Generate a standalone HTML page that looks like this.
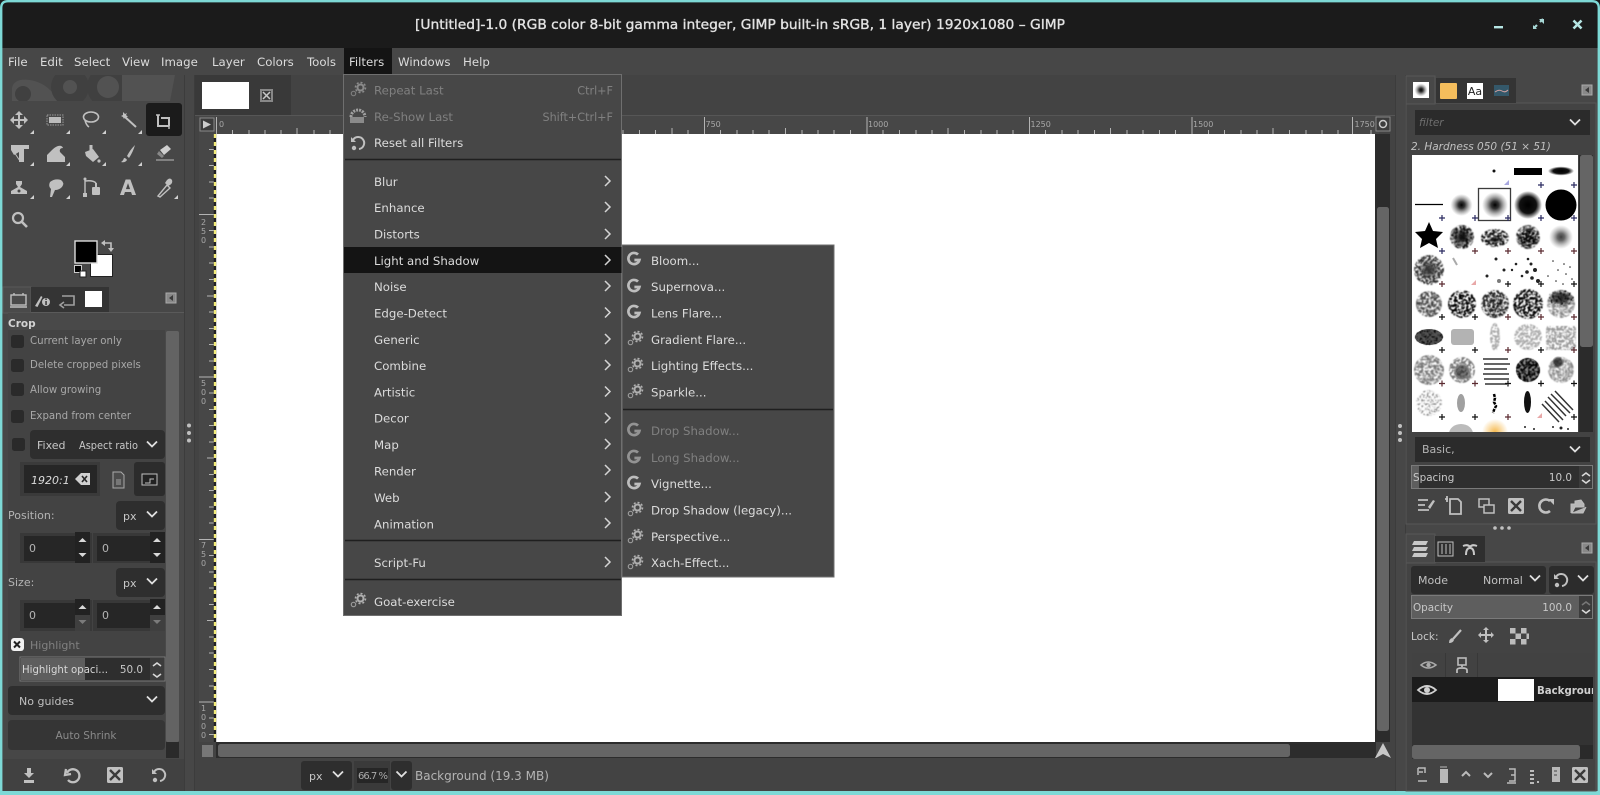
<!DOCTYPE html>
<html><head><meta charset="utf-8"><title>GIMP</title>
<style>
html,body{margin:0;padding:0;background:#474747;width:1600px;height:795px;overflow:hidden}
svg{display:block;position:absolute;left:0;top:0;filter:blur(.35px)}
text{font-family:"DejaVu Sans","Liberation Sans",sans-serif;font-size:11.75px;fill:#dcdcdc;white-space:pre}
.dis{fill:#808080}.sm{font-size:11px;fill:#b4b4b4}.op{font-size:10.2px;fill:#a8a8a8}.val{font-size:10.4px;fill:#c8c8c8}
.tiny{font-size:8px;fill:#a8a8a8}
.ic{fill:#c0c0c0;stroke:none}.st{fill:none;stroke:#c0c0c0;stroke-width:2}
</style></head><body>
<svg width="1600" height="795" viewBox="0 0 1600 795" xmlns="http://www.w3.org/2000/svg">
<defs>
<radialGradient id="sf"><stop offset="0" stop-color="#000"/><stop offset=".3" stop-color="#111" stop-opacity=".85"/><stop offset=".65" stop-color="#333" stop-opacity=".4"/><stop offset="1" stop-color="#555" stop-opacity="0"/></radialGradient>
<radialGradient id="sf2"><stop offset="0" stop-color="#000"/><stop offset=".6" stop-color="#111"/><stop offset="1" stop-color="#000" stop-opacity="0"/></radialGradient>
<radialGradient id="or"><stop offset="0" stop-color="#f6b94e"/><stop offset="1" stop-color="#f6b94e" stop-opacity="0"/></radialGradient>
<filter id="n1" x="-10%" y="-10%" width="120%" height="120%"><feTurbulence type="fractalNoise" baseFrequency=".38" numOctaves="2" seed="3"/><feColorMatrix values="0 0 0 0 0 0 0 0 0 0 0 0 0 0 0 2.2 2.2 0 0 -1.6"/><feComposite in="SourceGraphic" operator="in"/><feGaussianBlur stdDeviation=".5"/></filter>
<filter id="n2" x="-10%" y="-10%" width="120%" height="120%"><feTurbulence type="fractalNoise" baseFrequency=".42" numOctaves="2" seed="9"/><feColorMatrix values="0 0 0 0 0 0 0 0 0 0 0 0 0 0 0 4 4 0 0 -3.4"/><feComposite in="SourceGraphic" operator="in"/><feGaussianBlur stdDeviation=".45"/></filter>
<filter id="n3" x="-10%" y="-10%" width="120%" height="120%"><feTurbulence type="fractalNoise" baseFrequency=".55" numOctaves="1" seed="21"/><feColorMatrix values="0 0 0 0 0 0 0 0 0 0 0 0 0 0 0 4 4 0 0 -3.9"/><feComposite in="SourceGraphic" operator="in"/><feGaussianBlur stdDeviation=".4"/></filter>
<path id="cr" d="M-3 0h6M0-3v6" fill="none" stroke-width="1.2"/>
<g id="gear"><circle cx="10.5" cy="5.500" r="3" fill="none" stroke="#b0b0b0" stroke-width="2"/><circle cx="10.5" cy="5.500" r="5" fill="none" stroke="#b0b0b0" stroke-width="1.6" stroke-dasharray="2 1.9"/><circle cx="3.5" cy="11.5" r="2.2" fill="none" stroke="#9a9a9a" stroke-width="1.2"/></g>
<path id="gi" d="M11 2.6A5.6 5.6 0 1 0 12.4 8H7.4" fill="none" stroke="#bdbdbd" stroke-width="2.7"/>
<path id="chev" d="M-5-2.5 0 2.5 5-2.5" fill="none" stroke="#e0e0e0" stroke-width="1.8"/>
<path id="arr" d="M-2-5 3 0-2 5" fill="none" stroke="#d4d4d4" stroke-width="1.5"/>
<path id="tri" d="M3 0V4H-1Z" fill="#d0d0d0"/>
<path id="up" d="M-4 2 0-2 4 2Z" fill="#d8d8d8"/>
<path id="dn" d="M-4-2 0 2 4-2Z" fill="#d8d8d8"/>
<g id="reset"><path d="M-5-3A6 6 0 1 1 1 6" fill="none" stroke="#c0c0c0" stroke-width="2"/><path d="M-7-6V-1H-2Z" fill="#c0c0c0"/><circle cx="-4" cy="5" r="2.2" fill="#c0c0c0"/></g>
<g id="xbox"><rect x="-8" y="-8" width="16" height="16" rx="1.5" fill="#c0c0c0"/><path d="M-5-5 5 5M5-5-5 5" stroke="#3a3a3a" stroke-width="2.4"/></g>
<clipPath id="wm"><rect x="10" y="75" width="170" height="26"/></clipPath>
<clipPath id="br"><rect x="1412" y="155" width="166" height="277"/></clipPath>
<clipPath id="lay"><rect x="1412" y="660" width="181" height="50"/></clipPath>
</defs>

<!-- frame -->
<rect width="1600" height="795" fill="#474747"/>
<rect x="0" y="0" width="1600" height="48" fill="#1b1b1b"/>
<path d="M1.2 795V8Q1.2 1.2 8 1.2H1592Q1598.8 1.2 1598.8 8V795" fill="none" stroke="#7dd9d6" stroke-width="2.4"/>
<rect x="0" y="791" width="1600" height="4" fill="#7dd9d6"/>
<text x="740" y="29" text-anchor="middle" style="font-size:13.5px;fill:#e2e2e2;stroke:#e2e2e2;stroke-width:.35px" textLength="650" lengthAdjust="spacingAndGlyphs">[Untitled]-1.0 (RGB color 8-bit gamma integer, GIMP built-in sRGB, 1 layer) 1920x1080 – GIMP</text>
<rect x="1494" y="26" width="9" height="2.4" fill="#b6e6e4"/>
<path d="M1534 28l3-3M1540 22l3-3" stroke="#a8d8d6" stroke-width="2.2"/><path d="M1539 19h5v5ZM1537 29h-4v-4Z" fill="#a8d8d6"/>
<path d="M1573.5 20.5l8 8M1581.5 20.5l-8 8" stroke="#b6e6e4" stroke-width="2.6"/>

<!-- menubar -->
<rect x="344" y="48" width="48" height="27" fill="#141414"/>
<text x="8" y="66">File</text><text x="40" y="66">Edit</text><text x="74" y="66">Select</text><text x="122" y="66">View</text><text x="161" y="66">Image</text><text x="212" y="66">Layer</text><text x="257" y="66">Colors</text><text x="307" y="66">Tools</text><text x="349" y="66">Filters</text><text x="398" y="66">Windows</text><text x="463" y="66">Help</text>

<!-- toolbox -->
<g clip-path="url(#wm)">
<path d="M12 101V88Q14 78 30 80 42 82 50 90L62 101Z" fill="#525252"/>
<circle cx="70" cy="87" r="19" fill="#404040"/><circle cx="70" cy="87" r="7" fill="#525252"/>
<circle cx="108" cy="87" r="21" fill="#404040"/><circle cx="108" cy="87" r="11" fill="#525252"/>
<path d="M122 75H175L170 101H122Z" fill="#525252"/>
<circle cx="23" cy="94" r="8" fill="#404040"/>
</g>
<rect x="146" y="103" width="36" height="33" rx="3" fill="#1b1b1b"/>
<!-- row 1 -->
<path d="M19 111l4 4h-3v4h4v-3l4 4-4 4v-3h-4v4h3l-4 4-4-4h3v-4h-4v3l-4-4 4-4v3h4v-4h-3z" class="ic"/>
<rect x="47" y="115" width="16" height="10" fill="none" stroke="#999" stroke-dasharray="1.5 1"/><rect x="49" y="117" width="12" height="6" fill="#bbb"/>
<ellipse cx="91" cy="117" rx="7.5" ry="5" fill="none" stroke="#c0c0c0" stroke-width="1.6"/><path d="M85 120q1 5 4 7" fill="none" stroke="#c0c0c0" stroke-width="1.6"/>
<path d="M125 117l11 10" stroke="#c0c0c0" stroke-width="2"/><path d="M123 112l2 2 2-1-1 2 2 2-3 0-1 2-1-2-2-1 2-1z" class="ic"/>
<path d="M158 115v11h11M161 118h8v8" fill="none" stroke="#c0c0c0" stroke-width="2"/><path d="M156 115h4M169 126v3" stroke="#c0c0c0" stroke-width="1.4"/>
<!-- row 2 -->
<path d="M11 145H29V149H24V162H19V152L14 155 11 150Z" class="ic"/><path d="M14 152l6 9" stroke="#c0c0c0" stroke-width="1"/>
<path d="M47 162V155L52 150Q55 147 58 146 62 145 63 148 59 148 60 152L65 157V162Z" class="ic"/>
<path d="M85 152l8-3 6 8-6 5-7-6z" class="ic"/><path d="M91 145v8" stroke="#c0c0c0" stroke-width="3"/><circle cx="99" cy="161" r="1.6" class="ic"/>
<path d="M135 145q-5 5-8 11l2 2q4-6 6-13zM124 158q2 0 3 2-2 3-6 2 2-1 3-4z" class="ic"/>
<path d="M160 150l7-5 4 4-7 6z" fill="#cfcfcf"/><path d="M159 151l5 5-2 2-5-4z" fill="#888"/><path d="M156 160h18" stroke="#bbb"/>
<!-- row 3 -->
<path d="M16 181h6v3l-2 3 7 4v3H11v-3l7-4-2-3z" class="ic"/><circle cx="19" cy="191" r="1.5" fill="#474747"/>
<path d="M50 182q5-4 11-2 4 3 1 7-3 3-7 3l-3 7h-2l1-8q-3-3-1-7z" class="ic"/>
<circle cx="85" cy="179" r="1.5" class="ic"/><path d="M85 180v14M85 181q8-1 11 2" fill="none" stroke="#c0c0c0" stroke-width="1.4"/><rect x="92" y="187" width="8" height="8" rx="1" class="ic"/><rect x="95" y="183" width="2" height="4" class="ic"/><rect x="83" y="193" width="4" height="4" class="ic"/>
<text x="128" y="195" text-anchor="middle" style="font-size:21px;font-weight:700;fill:#c0c0c0">A</text>
<path d="M158 196l9-11 3 3-10 9z" fill="none" stroke="#c0c0c0" stroke-width="1.4"/><path d="M167 180q3-3 5 0 1 3-2 5l-2 1-3-3z" class="ic"/>
<!-- magnifier -->
<circle cx="18" cy="218" r="5" fill="none" stroke="#c0c0c0" stroke-width="2.2"/><path d="M22 222l5 5" stroke="#c0c0c0" stroke-width="2.6"/>
<use href="#tri" x="31" y="130"/><use href="#tri" x="67" y="130"/><use href="#tri" x="103" y="130"/><use href="#tri" x="139" y="130"/><use href="#tri" x="31" y="162"/><use href="#tri" x="67" y="162"/><use href="#tri" x="103" y="162"/><use href="#tri" x="139" y="162"/><use href="#tri" x="31" y="195"/><use href="#tri" x="67" y="195"/><use href="#tri" x="175" y="195"/>
<!-- fg/bg -->
<rect x="90.5" y="254.5" width="22" height="22" fill="#fff" stroke="#222"/>
<rect x="75" y="241" width="22" height="22" fill="#000" stroke="#ddd" stroke-width="1.4"/>
<path d="M103 243h8v6" fill="none" stroke="#c0c0c0" stroke-width="1.6"/><path d="M101 243l4-3v6ZM108 248h6l-3 4Z" fill="#c0c0c0"/>
<rect x="74.5" y="265.5" width="7" height="7" fill="#000" stroke="#ccc"/><rect x="80" y="271" width="6" height="6" fill="#fff" stroke="#222"/>

<!-- dock tabs -->
<rect x="3" y="312" width="181" height="1" fill="#5a5a5a"/>
<rect x="3" y="287" width="28" height="26" fill="#4a4a4a" stroke="#585858"/>
<rect x="31" y="287" width="78" height="25" fill="#343434"/>
<rect x="11" y="295" width="15" height="10" fill="none" stroke="#c0c0c0" stroke-width="1.4"/><path d="M10 307h17M14 293v2M23 293v2" stroke="#c0c0c0" stroke-width="1.4"/>
<path d="M35 306l6-10 1.500 1-5 10z" class="ic"/><circle cx="46" cy="302" r="4" class="ic"/><rect x="45.300" y="298.500" width="1.500" height="1.500" fill="#343434"/><rect x="45.300" y="301" width="1.500" height="4" fill="#343434"/>
<path d="M62 296h12v9H64M64 302l-4 3 4 3" fill="none" stroke="#a0a0a0" stroke-width="1.6"/>
<rect x="85" y="291" width="17" height="16" fill="#fff"/>
<rect x="166" y="293" width="10" height="10" fill="#888" stroke="#aaa"/><path d="M173 295v6l-4-3Z" fill="#3a3a3a"/>

<!-- tool options -->
<rect x="8" y="313" width="176" height="437" fill="#494949"/>
<rect x="8" y="330" width="157" height="420" fill="#434343"/>
<text x="8" y="327" style="font-size:10.5px;font-weight:700;fill:#d4d4d4">Crop</text>
<rect x="166" y="331" width="13" height="411" rx="2" fill="#636363"/><rect x="166" y="742" width="13" height="16" fill="#2a2a2a"/>
<g fill="#2a2a2a"><rect x="11" y="335" width="13" height="13" rx="2.5"/><rect x="11" y="359" width="13" height="13" rx="2.5"/><rect x="11" y="383" width="13" height="13" rx="2.5"/><rect x="11" y="410" width="13" height="13" rx="2.5"/><rect x="12" y="438" width="13" height="13" rx="2.5"/></g>
<text x="30" y="344" class="op">Current layer only</text><text x="30" y="368" class="op">Delete cropped pixels</text><text x="30" y="393" class="op">Allow growing</text><text x="30" y="419" class="op">Expand from center</text>
<rect x="30" y="430" width="135" height="29" rx="4" fill="#2e2e2e"/>
<text x="37" y="449" class="sm" style="fill:#c8c8c8">Fixed</text><text x="79" y="449" class="sm" style="fill:#c8c8c8" textLength="59" lengthAdjust="spacingAndGlyphs">Aspect ratio</text><use href="#chev" x="152" y="444"/>
<rect x="20" y="462" width="80" height="34" fill="#3a3a3a"/><rect x="24" y="465" width="73" height="28" fill="#262626"/>
<text x="31" y="484" style="font-size:11px;font-style:italic;fill:#dcdcdc">1920:1</text>
<path d="M75 479l6-6h9v12h-9z" fill="#d0d0d0"/><path d="M82 476l5 6M87 476l-5 6" stroke="#262626" stroke-width="1.6"/>
<path d="M113 472h8l3 3v13h-11z" fill="#4c4c4c" stroke="#aaa"/><rect x="116" y="479" width="5" height="6" fill="#777"/>
<rect x="134" y="462" width="31" height="34" rx="3" fill="#2c2c2c"/><rect x="142" y="474" width="15" height="11" fill="#222" stroke="#c0c0c0"/><path d="M145 483h5v-4h4" stroke="#c0c0c0" fill="none"/>
<text x="8" y="519" class="sm">Position:</text>
<rect x="116" y="501" width="49" height="29" rx="4" fill="#2e2e2e"/><text x="123" y="520" class="sm" style="fill:#c8c8c8">px</text><use href="#chev" x="152" y="514"/>
<!-- spins pos -->
<rect x="20" y="533" width="72" height="30" fill="#383838"/><rect x="24" y="536" width="51" height="25" fill="#262626"/><rect x="75" y="532" width="15" height="31" fill="#222"/>
<rect x="93" y="533" width="72" height="30" fill="#383838"/><rect x="97" y="536" width="53" height="25" fill="#262626"/><rect x="150" y="532" width="15" height="31" fill="#222"/>
<text x="29" y="552" class="sm">0</text><text x="102" y="552" class="sm">0</text>
<use href="#up" x="82.500" y="540"/><use href="#dn" x="82.500" y="555"/><use href="#up" x="157" y="540"/><use href="#dn" x="157" y="555"/>
<text x="8" y="586" class="sm">Size:</text>
<rect x="116" y="568" width="49" height="29" rx="4" fill="#2e2e2e"/><text x="123" y="587" class="sm" style="fill:#c8c8c8">px</text><use href="#chev" x="152" y="581"/>
<rect x="20" y="600" width="72" height="31" fill="#383838"/><rect x="24" y="603" width="51" height="25" fill="#262626"/><rect x="75" y="599" width="15" height="16" fill="#222"/><rect x="75" y="615" width="15" height="16" fill="#3f3f3f"/>
<rect x="93" y="600" width="72" height="31" fill="#383838"/><rect x="97" y="603" width="53" height="25" fill="#262626"/><rect x="150" y="599" width="15" height="16" fill="#222"/><rect x="150" y="615" width="15" height="16" fill="#3f3f3f"/>
<text x="29" y="619" class="sm">0</text><text x="102" y="619" class="sm">0</text>
<use href="#up" x="82.500" y="607"/><use href="#dn" x="82.500" y="622" style="opacity:.4"/><use href="#up" x="157" y="607"/><use href="#dn" x="157" y="622" style="opacity:.4"/>
<rect x="11" y="638" width="13" height="13" rx="3" fill="#f2f2f2"/><path d="M14 641.500l6 6M20 641.500l-6 6" stroke="#222" stroke-width="2"/>
<text x="30" y="649" style="font-size:11px;fill:#808080">Highlight</text>
<rect x="20" y="657" width="145" height="24" fill="#2e2e2e" stroke="#7a7a7a"/><rect x="21" y="658" width="64" height="22" fill="#5e5e5e"/><rect x="150" y="658" width="14" height="22" fill="#3c3c3c"/>
<text x="22" y="673" class="sm" style="fill:#d8d8d8" textLength="86" lengthAdjust="spacingAndGlyphs">Highlight opaci...</text><text x="143" y="673" class="val" text-anchor="end">50.0</text>
<path d="M153 666l4-3 4 3M153 674l4 3 4-3" fill="none" stroke="#d8d8d8" stroke-width="1.6"/>
<rect x="8" y="686" width="157" height="29" rx="4" fill="#2e2e2e"/><text x="19" y="705" class="sm" style="fill:#c0c0c0">No guides</text><use href="#chev" x="152" y="699"/>
<rect x="8" y="720" width="157" height="30" rx="4" fill="#353535"/><text x="86" y="739" text-anchor="middle" style="font-size:10.5px;fill:#8a8a8a">Auto Shrink</text>
<rect x="3" y="759" width="181" height="32" fill="#414141"/>
<path d="M27 768h4v5h3l-5 5-5-5h3z" class="ic"/><rect x="24" y="780" width="10" height="3" class="ic"/>
<path d="M66 769l-1 6 6-1M67 773a6.500 6.500 0 1 1 1 7" fill="none" stroke="#c0c0c0" stroke-width="2.300"/>
<use href="#xbox" x="115" y="775"/><use href="#reset" x="159" y="775"/>

<!-- handles -->
<rect x="184" y="75" width="1" height="716" fill="#3c3c3c"/><rect x="194" y="75" width="1" height="716" fill="#3c3c3c"/>
<circle cx="189" cy="425.500" r="2" fill="#c0c0c0"/><circle cx="189" cy="433" r="2" fill="#c0c0c0"/><circle cx="189" cy="440.500" r="2" fill="#c0c0c0"/>

<!-- image area -->
<rect x="195" y="75" width="1200" height="716" fill="#434343"/>
<rect x="195" y="75" width="96" height="41" fill="#393939"/>
<rect x="195" y="115" width="1200" height="1" fill="#565656"/>
<rect x="202" y="82" width="47" height="27" fill="#fff"/>
<rect x="260" y="89" width="13" height="13" fill="#888"/><rect x="262" y="91" width="9" height="9" fill="#3c3c3c"/><path d="M263 92l7 7M270 92l-7 7" stroke="#c8c8c8" stroke-width="1.500"/>
<!-- rulers -->
<rect x="199" y="116" width="1180" height="18" fill="#474747"/><rect x="199" y="134" width="16" height="608" fill="#474747"/>
<rect x="200" y="118" width="14" height="13" fill="#3c3c3c" stroke="#888"/><path d="M203 120.500l8 4-8 4z" fill="#ccc"/>
<path d="M216.500 117v17M232.500 130v4M249 130v4M265 130v4M281 130v4M297 128v6M314 130v4M330 130v4M346 128v6M704.500 117v17M867 117v17M1029.500 117v17M1192 117v17M1352.500 117v17" stroke="#b4b4b4"/>
<path d="M623 130v4M639.500 130v4M655.500 130v4M672 128v6M688 130v4M720.500 130v4M737 130v4M753 130v4M769 130v4M785.500 128v6M802 130v4M818 130v4M834 130v4M850.500 130v4M883 130v4M899.500 130v4M916 130v4M932 130v4M948 128v6M964.500 130v4M981 130v4M997 130v4M1013 130v4M1045.500 130v4M1062 130v4M1078 130v4M1094.500 130v4M1110.500 128v6M1127 130v4M1143 130v4M1159.500 130v4M1175.500 130v4M1208.500 130v4M1224.500 130v4M1241 130v4M1257 130v4M1273 128v6M1289.500 130v4M1306 130v4M1322 130v4M1338 130v4M1371 130v4" stroke="#b4b4b4"/>
<text x="219" y="127" class="tiny">0</text><text x="705.500" y="127" class="tiny">750</text><text x="868" y="127" class="tiny">1000</text><text x="1030.500" y="127" class="tiny">1250</text><text x="1193" y="127" class="tiny">1500</text><text x="1354.500" y="127" class="tiny">1750</text>
<rect x="1376" y="117" width="14" height="14" fill="#3c3c3c" stroke="#888"/><circle cx="1383" cy="124" r="3.500" fill="none" stroke="#ccc" stroke-width="1.500"/>
<path d="M199 214.500h16M199 377h16M199 539.500h16M199 702h16" stroke="#b4b4b4"/>
<path d="M209 149.500h6M209 165.500h6M209 182h6M209 198h6M209 230.500h6M209 247h6M209 263h6M209 279.500h6M207 296h8M209 312h6M209 328.500h6M209 344.500h6M209 361h6M209 393h6M209 409.500h6M209 425.500h6M209 442h6M207 458h8M209 474.500h6M209 490.500h6M209 507h6M209 523h6M209 555.500h6M209 572h6M209 588h6M209 604.500h6M207 620.500h8M209 637h6M209 653h6M209 669.500h6M209 686h6M209 718h6M209 734.500h6" stroke="#b4b4b4"/>
<text x="201" y="225" class="tiny">2</text><text x="201" y="234" class="tiny">5</text><text x="201" y="243" class="tiny">0</text><text x="201" y="386" class="tiny">5</text><text x="201" y="395" class="tiny">0</text><text x="201" y="404" class="tiny">0</text><text x="201" y="548" class="tiny">7</text><text x="201" y="557" class="tiny">5</text><text x="201" y="566" class="tiny">0</text><text x="201" y="711" class="tiny">1</text><text x="201" y="720" class="tiny">0</text><text x="201" y="729" class="tiny">0</text><text x="201" y="738" class="tiny">0</text>
<!-- canvas -->
<rect x="216" y="134" width="1159" height="608" fill="#fff"/>
<path d="M215 134V742" stroke="#222" stroke-width="2.400"/><path d="M215 134V742" stroke="#f3ec7a" stroke-width="2.400" stroke-dasharray="4 4"/>
<!-- scrollbars -->
<rect x="216" y="742" width="1160" height="16" fill="#2c2c2c"/><rect x="218" y="744" width="1072" height="13" rx="2.500" fill="#656565"/>
<rect x="1375" y="134" width="15" height="608" fill="#2c2c2c"/><rect x="1377" y="207" width="12" height="524" rx="2.500" fill="#656565"/>
<rect x="202" y="745" width="11" height="12" fill="#777"/>
<path d="M1376 758h-1l8-15 8 15-8-4z" fill="#c8c8c8"/>
<!-- status -->
<rect x="301" y="761" width="51" height="29" rx="3" fill="#2e2e2e"/><text x="309" y="780" class="sm" style="fill:#c8c8c8">px</text><use href="#chev" x="338" y="774"/>
<rect x="354" y="761" width="36" height="29" fill="#3a3a3a"/><rect x="357" y="768" width="31" height="15" fill="#262626"/><text x="358" y="779" style="font-size:10px;fill:#aaa" textLength="30">66.7 %</text>
<rect x="391" y="761" width="21" height="29" rx="3" fill="#2e2e2e"/><use href="#chev" x="401.500" y="774"/>
<text x="415" y="780" style="font-size:12px;fill:#b4b4b4">Background (19.3 MB)</text>

<!-- right dock -->
<rect x="1395" y="75" width="1" height="716" fill="#3c3c3c"/><rect x="1405" y="75" width="1" height="716" fill="#3c3c3c"/>
<circle cx="1400" cy="426" r="2" fill="#c0c0c0"/><circle cx="1400" cy="433" r="2" fill="#c0c0c0"/><circle cx="1400" cy="440" r="2" fill="#c0c0c0"/>
<rect x="1406" y="103" width="190" height="421" fill="#434343" stroke="#575757"/>
<rect x="1406" y="76" width="29" height="28" fill="#484848" stroke="#575757"/>
<rect x="1436" y="78" width="80" height="25" fill="#343434"/>
<rect x="1413" y="82" width="16" height="16" fill="#fff"/><circle cx="1421" cy="90" r="6.500" fill="url(#sf)"/>
<rect x="1440" y="83" width="17" height="16" rx="1" fill="#f4bd5c"/>
<rect x="1467" y="83" width="16" height="16" fill="#fff"/><text x="1475" y="95" text-anchor="middle" style="font-size:11px;fill:#222">Aa</text>
<rect x="1494" y="85" width="15" height="11" fill="#34586a"/><path d="M1495 92q4-3 7-1t6-1" stroke="#d0a0a0" fill="none"/>
<rect x="1582" y="85" width="10" height="10" fill="#888" stroke="#aaa"/><path d="M1589 87v6l-4-3Z" fill="#3a3a3a"/>
<rect x="1415" y="110" width="175" height="25" fill="#2b2b2b"/><text x="1419" y="126" style="font-size:10.500px;font-style:italic;fill:#6e6e6e">filter</text><use href="#chev" x="1575" y="122"/>
<text x="1411" y="150" style="font-size:10.500px;font-style:italic;fill:#c0c0c0">2. Hardness 050 (51 × 51)</text>

<!-- brush grid -->
<rect x="1412" y="155" width="166" height="277" fill="#fff"/>
<g clip-path="url(#br)">
<circle cx="1494" cy="171" r="1.500" fill="#111"/><rect x="1514" y="168" width="28" height="7"/><ellipse cx="1561" cy="171" rx="13" ry="4.500" fill="url(#sf2)"/>
<path d="M1415 204.500h28" stroke="#000" stroke-width="1.300"/>
<circle cx="1461.500" cy="205" r="11" fill="url(#sf)"/><circle cx="1495" cy="205" r="13" fill="url(#sf)"/><circle cx="1528" cy="205" r="14" fill="url(#sf2)"/><circle cx="1561" cy="205" r="15.500" fill="#000"/>
<rect x="1478.500" y="188.500" width="32" height="32" fill="none" stroke="#3c3c3c" stroke-width="1.300"/>
<path d="M1429 222l4 9 10 1-7 7 2 9-9-5-9 5 2-9-7-7 10-1z" fill="#000"/>
<circle cx="1462" cy="237" r="11" fill="url(#sf)"/>
<g filter="url(#n1)"><circle cx="1462" cy="237" r="12" fill="#111"/><circle cx="1528" cy="237" r="12" fill="#222"/></g>
<g filter="url(#n2)"><ellipse cx="1495" cy="238" rx="14" ry="9" fill="#111"/><circle cx="1528" cy="238" r="8" fill="#000"/></g>
<ellipse cx="1495" cy="240" rx="9" ry="4" fill="url(#sf)"/>
<circle cx="1561" cy="237" r="12" fill="url(#sf)" opacity=".75"/>
<circle cx="1429" cy="270" r="13" fill="url(#sf)" opacity=".8"/><circle cx="1429" cy="270" r="15" fill="#333" filter="url(#n2)"/>
<g fill="#222"><circle cx="1496" cy="259" r="1.500"/><circle cx="1504" cy="270" r="1.500"/><circle cx="1512" cy="270" r="1.200"/><circle cx="1487" cy="276" r="1.500"/><circle cx="1499" cy="281" r="2" opacity=".6"/><circle cx="1531" cy="264" r="1.500"/><circle cx="1527" cy="272" r="1.800"/><circle cx="1535" cy="270" r="2"/><circle cx="1522" cy="276" r="1.300"/><circle cx="1532" cy="278" r="1.800"/><circle cx="1538" cy="281" r="2"/><circle cx="1528" cy="259" r="1.300"/><circle cx="1516" cy="264" r="1.300"/><circle cx="1553" cy="261" r=".8"/><circle cx="1564" cy="264" r=".8"/><circle cx="1570" cy="267" r=".8"/><circle cx="1558" cy="270" r=".8"/><circle cx="1548" cy="276" r=".8"/><circle cx="1566" cy="274" r=".8"/><circle cx="1556" cy="281" r=".8"/><circle cx="1572" cy="279" r=".8"/><circle cx="1563" cy="284" r=".8"/></g>
<path d="M1453 258l4 7" stroke="#aaa" stroke-width="2"/>
<circle cx="1429" cy="304" r="13" fill="#444" filter="url(#n1)"/>
<g filter="url(#n2)"><circle cx="1462" cy="304" r="14" fill="#000"/><circle cx="1495" cy="304" r="14" fill="#222"/><circle cx="1528" cy="304" r="15" fill="#000"/></g>
<circle cx="1495" cy="305" r="8" fill="#111" filter="url(#n3)"/>
<circle cx="1561" cy="304" r="14" fill="#888" filter="url(#n1)"/><ellipse cx="1561" cy="298" rx="13" ry="8" fill="#000" filter="url(#n3)"/><ellipse cx="1561" cy="298" rx="12" ry="7" fill="url(#sf2)" opacity=".7"/>
<ellipse cx="1429" cy="337" rx="14" ry="8" fill="#555"/><ellipse cx="1429" cy="337" rx="14" ry="8" fill="#000" filter="url(#n3)"/>
<rect x="1451" y="329" width="23" height="16" rx="3" fill="#999" opacity=".75"/>
<ellipse cx="1495" cy="337" rx="5" ry="14" fill="#aaa" filter="url(#n2)"/><ellipse cx="1528" cy="337" rx="14" ry="13" fill="#aaa" filter="url(#n2)"/><rect x="1546" y="326" width="30" height="24" fill="#999" filter="url(#n2)"/>
<circle cx="1429" cy="370" r="15" fill="#777" filter="url(#n1)"/>
<circle cx="1462" cy="372" r="9" fill="url(#sf2)" opacity=".8"/><circle cx="1462" cy="370" r="13" fill="#777" filter="url(#n2)"/>
<g stroke="#333" stroke-width="1.600"><path d="M1483 359h25M1484 364h26M1484 369h23M1483 374h26M1484 379h25M1485 384h22"/></g>
<circle cx="1528" cy="370" r="12" fill="#888"/><circle cx="1528" cy="370" r="12" fill="#000" filter="url(#n2)"/>
<circle cx="1561" cy="370" r="13" fill="#888" filter="url(#n1)"/><circle cx="1558" cy="362" r="6" fill="url(#sf2)" opacity=".7"/>
<circle cx="1429" cy="403" r="13" fill="#888" filter="url(#n3)"/>
<ellipse cx="1461" cy="403" rx="4" ry="9" fill="#888" opacity=".8"/>
<path d="M1494 394l1 4-1 4 2 4-2 4-1 3" stroke="#000" stroke-width="2.500" fill="none" stroke-dasharray="3 1"/>
<ellipse cx="1527.500" cy="402" rx="3.500" ry="11" fill="#111"/>
<g stroke="#333" stroke-width="1.500"><path d="M1548 397l18 19M1551 394l19 19M1545 401l18 19M1555 391l18 19M1542 404l17 18"/></g>
<ellipse cx="1461" cy="434" rx="12" ry="10" fill="#aaa" opacity=".8"/><circle cx="1495" cy="432" r="13" fill="url(#or)"/>
<g fill="#222"><circle cx="1525" cy="427" r="1"/><circle cx="1534" cy="429" r="1"/><circle cx="1553" cy="427" r="1"/><circle cx="1561" cy="428" r="1.500"/><circle cx="1568" cy="429" r="1"/></g>
<!-- crosses -->
<g stroke="#2a2a60"><use href="#cr" x="1541" y="185"/><use href="#cr" x="1574" y="185"/><use href="#cr" x="1442" y="218"/><use href="#cr" x="1475" y="218"/><use href="#cr" x="1508" y="218"/><use href="#cr" x="1541" y="218"/><use href="#cr" x="1574" y="218"/><use href="#cr" x="1442" y="251"/></g>
<g stroke="#5a2a30"><use href="#cr" x="1475" y="251"/><use href="#cr" x="1508" y="251"/><use href="#cr" x="1541" y="251"/><use href="#cr" x="1574" y="251"/><use href="#cr" x="1442" y="284"/><use href="#cr" x="1508" y="317"/><use href="#cr" x="1541" y="317"/><use href="#cr" x="1574" y="317"/><use href="#cr" x="1508" y="350"/><use href="#cr" x="1574" y="350"/><use href="#cr" x="1442" y="383.500"/><use href="#cr" x="1475" y="383.500"/><use href="#cr" x="1508" y="417"/></g>
<g stroke="#111"><use href="#cr" x="1508" y="284"/><use href="#cr" x="1541" y="284"/><use href="#cr" x="1574" y="284"/><use href="#cr" x="1442" y="317"/><use href="#cr" x="1475" y="317"/><use href="#cr" x="1442" y="350"/><use href="#cr" x="1475" y="350"/><use href="#cr" x="1541" y="350"/><use href="#cr" x="1508" y="383.500"/><use href="#cr" x="1541" y="383.500"/><use href="#cr" x="1574" y="383.500"/><use href="#cr" x="1442" y="417"/><use href="#cr" x="1475" y="417"/><use href="#cr" x="1574" y="417"/></g>
<path d="M1471 285l5-5v5ZM1537 418l5-5v5Z" fill="#e8a8a8"/><path d="M1504 185l5-5v5Z" fill="#a8a8e0"/>
</g>
<rect x="1579" y="155" width="14" height="277" fill="#2b2b2b"/><rect x="1580" y="155" width="13" height="192" rx="2.500" fill="#656565"/>

<rect x="1415" y="437" width="175" height="25" fill="#2b2b2b"/><text x="1422" y="453" class="sm">Basic,</text><use href="#chev" x="1575" y="449"/>
<rect x="1411.500" y="465.500" width="181" height="23" fill="#2f2f2f" stroke="#7a7a7a"/><rect x="1412" y="466" width="7" height="22" fill="#5e5e5e"/><rect x="1579" y="466" width="13" height="22" fill="#3c3c3c"/>
<text x="1413" y="481" class="val">Spacing</text><text x="1572" y="481" class="val" text-anchor="end">10.0</text>
<path d="M1582 476l4-3 4 3M1582 480l4 3 4-3" fill="none" stroke="#d8d8d8" stroke-width="1.600"/>
<!-- brush buttons -->
<path d="M1418 500h10M1418 505h7M1418 510h11" stroke="#c0c0c0" stroke-width="1.800"/><path d="M1428 507l5-7 2 1-5 8z" class="ic"/>
<path d="M1450 499v15h11v-12l-3-3zM1448 499h-3M1447 496v6" fill="none" stroke="#c0c0c0" stroke-width="1.800"/>
<rect x="1479" y="499" width="10" height="8" fill="none" stroke="#c0c0c0" stroke-width="1.500"/><rect x="1484" y="505" width="10" height="8" fill="#434343" stroke="#c0c0c0" stroke-width="1.500"/>
<use href="#xbox" x="1516" y="506"/>
<path d="M1550 501a6.500 6.500 0 1 0 0 10" fill="none" stroke="#c0c0c0" stroke-width="2.600"/><path d="M1548 499l6 0 0 6z" class="ic"/>
<path d="M1571 513v-9h4v-3l6-1 3 4v3h-9l-3 6h11l3-6" fill="#b8b8b8" stroke="#c0c0c0"/>
<circle cx="1495" cy="528" r="1.800" fill="#c0c0c0"/><circle cx="1502" cy="528" r="1.800" fill="#c0c0c0"/><circle cx="1509" cy="528" r="1.800" fill="#c0c0c0"/>
<!-- layers -->
<rect x="1406" y="562" width="190" height="229" fill="#434343" stroke="#575757"/>
<rect x="1406" y="534" width="29" height="29" fill="#484848" stroke="#575757"/><rect x="1435" y="536" width="50" height="26" fill="#2f2f2f"/>
<path d="M1414 544h14l-2 4h-14zM1414 550h14l-2 4h-14zM1414 556h14l-2 4h-14z" fill="#c8c8c8" transform="translate(0 -3)"/>
<rect x="1438" y="542" width="15" height="14" fill="none" stroke="#c0c0c0"/><path d="M1442 544v10M1446 544v10M1450 544v10" stroke="#c0c0c0"/>
<path d="M1463 546q5-2 7 1 2-3 7-1M1466 555q0-7 4-7 4 0 4 7" fill="none" stroke="#c8c8c8" stroke-width="2"/>
<rect x="1582" y="543" width="10" height="10" fill="#888" stroke="#aaa"/><path d="M1589 545v6l-4-3Z" fill="#3a3a3a"/>
<rect x="1411" y="566" width="135" height="28" rx="3" fill="#2c2c2c"/><text x="1418" y="584" class="sm" style="fill:#c0c0c0">Mode</text><text x="1483" y="584" class="sm" style="fill:#c0c0c0">Normal</text><use href="#chev" x="1535" y="578"/>
<rect x="1549" y="566" width="45" height="28" rx="3" fill="#2c2c2c"/><use href="#reset" x="1561" y="580"/><use href="#chev" x="1583" y="578"/>
<rect x="1411.500" y="595.500" width="181" height="23" fill="#5e5e5e" stroke="#7a7a7a"/><rect x="1579" y="596" width="13" height="22" fill="#3c3c3c"/>
<text x="1413" y="611" class="val">Opacity</text><text x="1572" y="611" class="val" text-anchor="end">100.0</text>
<path d="M1582 605l4-3 4 3" fill="none" stroke="#777" stroke-width="1.600"/><path d="M1582 610l4 3 4-3" fill="none" stroke="#d8d8d8" stroke-width="1.600"/>
<text x="1411" y="640" style="font-size:10.500px;fill:#c8c8c8">Lock:</text>
<path d="M1461 630l-8 9" stroke="#c0c0c0" stroke-width="2.200"/><path d="M1449 643q0-4 3-5l2 2q-1 3-5 3z" class="ic"/>
<path d="M1486 627l3 3h-2v4h4v-2l3 3-3 3v-2h-4v4h2l-3 3-3-3h2v-4h-4v2l-3-3 3-3v2h4v-4h-2z" class="ic"/>
<g fill="#bcbcbc"><rect x="1510" y="628" width="5.500" height="5.500"/><rect x="1521" y="628" width="5.500" height="5.500"/><rect x="1515.500" y="633.500" width="5.500" height="5.500"/><rect x="1526.500" y="633.500" width="2.500" height="5.500"/><rect x="1510" y="639" width="5.500" height="5.500"/><rect x="1521" y="639" width="5.500" height="5.500"/></g>
<rect x="1412" y="653" width="181" height="92" fill="#333"/>
<rect x="1412" y="653" width="181" height="24" fill="#424242"/><path d="M1445.500 653v24M1477.500 653v24" stroke="#383838"/>
<path d="M1421 665q7-6 15 0-8 6-15 0z" fill="none" stroke="#aaa" stroke-width="1.500"/><circle cx="1428.500" cy="665" r="2.200" fill="#aaa"/>
<rect x="1458" y="658" width="8" height="7" fill="none" stroke="#bbb" stroke-width="1.600"/><path d="M1462 665v2M1457 673v-3q0-2 5-2t5 2v3" fill="none" stroke="#bbb" stroke-width="1.800"/>
<rect x="1412" y="677" width="181" height="25" fill="#1c1c1c"/>
<path d="M1418 690q9-8 18 0-9 8-18 0z" fill="none" stroke="#d0d0d0" stroke-width="1.800"/><circle cx="1427" cy="690" r="3" fill="#d0d0d0"/>
<rect x="1498" y="679" width="36" height="22" fill="#fff"/>
<text x="1537" y="694" style="font-size:10.200px;font-weight:700;fill:#d0d0d0" clip-path="url(#lay)">Background</text>
<rect x="1412" y="745" width="181" height="14" fill="#2a2a2a"/><rect x="1412" y="745" width="168" height="14" rx="2.500" fill="#656565"/>
<!-- layer buttons -->
<path d="M1418 768h7v5M1418 768v7M1419 772h4M1418 781h9" fill="none" stroke="#bbb" stroke-width="1.500"/>
<rect x="1440" y="769" width="8" height="14" fill="#b8b8b8"/><path d="M1440 767h7" stroke="#bbb"/>
<path d="M1462 776l4-4 4 4" fill="none" stroke="#bbb" stroke-width="2"/><path d="M1484 773l4 4 4-4" fill="none" stroke="#bbb" stroke-width="2"/>
<path d="M1509 769h6v6h-4M1515 775v6h-6M1507 783h9" fill="none" stroke="#bbb" stroke-width="1.500"/>
<path d="M1530 771h4M1530 775h4M1530 779h4M1530 783h4M1537 782h2" stroke="#bbb" stroke-width="2"/>
<rect x="1552" y="767" width="8" height="15" fill="#b8b8b8"/><path d="M1554 771h3M1554 775h3" stroke="#434343"/>
<use href="#xbox" x="1580" y="775"/>

<!-- filters menu -->
<rect x="343.500" y="74.500" width="278" height="541" fill="#474747" stroke="#6f6f6f"/>
<rect x="344" y="247" width="278" height="26" fill="#141414"/>
<path d="M345 159.500h276M345 540.500h276M345 579.500h276" stroke="#1f1f1f" stroke-width="1.400"/>
<use href="#gear" x="350" y="82" opacity=".65"/>
<path d="M351 117a7 7 0 0 1 14 0" fill="none" stroke="#a0a0a0" stroke-width="3" stroke-dasharray="2 1"/><rect x="350" y="117" width="14" height="6" fill="#8a8a8a"/>
<use href="#reset" x="358" y="143"/>
<use href="#gear" x="350" y="593"/>
<text x="374" y="94.500" class="dis">Repeat Last</text><text x="613" y="94.500" class="dis" text-anchor="end" style="font-size:11.200px">Ctrl+F</text>
<text x="374" y="121" class="dis">Re-Show Last</text><text x="613" y="121" class="dis" text-anchor="end" style="font-size:11.200px">Shift+Ctrl+F</text>
<text x="374" y="147">Reset all Filters</text>
<text x="374" y="186">Blur</text><text x="374" y="212">Enhance</text><text x="374" y="238.500">Distorts</text><text x="374" y="265">Light and Shadow</text><text x="374" y="291">Noise</text><text x="374" y="317.500">Edge-Detect</text><text x="374" y="344">Generic</text><text x="374" y="370">Combine</text><text x="374" y="396.500">Artistic</text><text x="374" y="422.500">Decor</text><text x="374" y="449">Map</text><text x="374" y="475.500">Render</text><text x="374" y="502">Web</text><text x="374" y="528.500">Animation</text><text x="374" y="567">Script-Fu</text><text x="374" y="606">Goat-exercise</text>
<use href="#arr" x="607" y="181"/><use href="#arr" x="607" y="207"/><use href="#arr" x="607" y="234"/><use href="#arr" x="607" y="260"/><use href="#arr" x="607" y="286"/><use href="#arr" x="607" y="312.500"/><use href="#arr" x="607" y="339"/><use href="#arr" x="607" y="365"/><use href="#arr" x="607" y="391.500"/><use href="#arr" x="607" y="418"/><use href="#arr" x="607" y="444"/><use href="#arr" x="607" y="470"/><use href="#arr" x="607" y="497"/><use href="#arr" x="607" y="523"/><use href="#arr" x="607" y="562"/>

<!-- submenu -->
<rect x="622" y="245" width="212" height="332" fill="#474747" stroke="#6f6f6f"/>
<path d="M623 409.500h210" stroke="#1f1f1f" stroke-width="1.400"/>
<use href="#gi" x="627" y="252"/><use href="#gi" x="627" y="279"/><use href="#gi" x="627" y="305"/>
<use href="#gear" x="627" y="331"/><use href="#gear" x="627" y="358"/><use href="#gear" x="627" y="384"/>
<use href="#gi" x="627" y="423" opacity=".65"/><use href="#gi" x="627" y="450" opacity=".65"/><use href="#gi" x="627" y="476"/>
<use href="#gear" x="627" y="502"/><use href="#gear" x="627" y="529"/><use href="#gear" x="627" y="555"/>
<text x="651" y="265">Bloom...</text><text x="651" y="291">Supernova...</text><text x="651" y="317.500">Lens Flare...</text><text x="651" y="344">Gradient Flare...</text><text x="651" y="370">Lighting Effects...</text><text x="651" y="396.500">Sparkle...</text>
<text x="651" y="435" class="dis">Drop Shadow...</text><text x="651" y="462" class="dis">Long Shadow...</text><text x="651" y="488">Vignette...</text><text x="651" y="514.500">Drop Shadow (legacy)...</text><text x="651" y="541">Perspective...</text><text x="651" y="567">Xach-Effect...</text>
</svg>
</body></html>
